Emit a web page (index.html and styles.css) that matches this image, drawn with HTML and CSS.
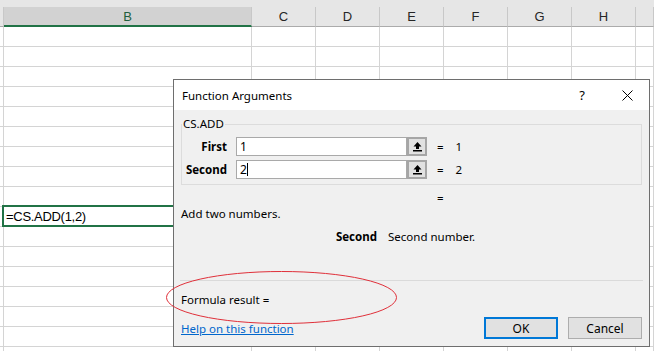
FILE: index.html
```html
<!DOCTYPE html>
<html lang="en">
<head>
  <meta charset="UTF-8" />
  <title>Function Arguments</title>
  <link rel="stylesheet" href="styles.css">
</head>
<body>
  <div class="sheet">
    <div class="colheads">
      <div class="ch"></div>
      <div class="ch sel">B</div>
      <div class="ch">C</div>
      <div class="ch">D</div>
      <div class="ch">E</div>
      <div class="ch">F</div>
      <div class="ch">G</div>
      <div class="ch">H</div>
      <div class="ch"></div>
    </div>
    <div class="grid" id="grid"></div>
  </div>

  <!-- Dialog -->
  <div class="dialog">
    <div class="titlebar">
      <span class="title">Function Arguments</span>
      <span class="help">?</span>
      <span class="close">
        <svg width="11" height="11" viewBox="0 0 11 11"><path d="M0.5 0.5 L10.5 10.5 M10.5 0.5 L0.5 10.5" stroke="#000" stroke-width="1" fill="none"/></svg>
      </span>
    </div>
    <div class="dlg-body">
      <fieldset class="group">
        <legend>CS.ADD</legend>
        <div class="arg">
          <span class="arg-name">First</span>
          <div class="field">1</div>
          <span class="pick">
            <svg width="9" height="10" viewBox="0 0 9 10"><path d="M4.5 0 L8.5 4.5 L6 4.5 L6 7 L3 7 L3 4.5 L0.5 4.5 Z" fill="#000"/><rect x="0" y="8" width="9" height="1.5" fill="#000"/></svg>
          </span>
          <span class="eq">=</span>
          <span class="val">1</span>
        </div>
        <div class="arg">
          <span class="arg-name">Second</span>
          <div class="field">2<span class="caret"></span></div>
          <span class="pick">
            <svg width="9" height="10" viewBox="0 0 9 10"><path d="M4.5 0 L8.5 4.5 L6 4.5 L6 7 L3 7 L3 4.5 L0.5 4.5 Z" fill="#000"/><rect x="0" y="8" width="9" height="1.5" fill="#000"/></svg>
          </span>
          <span class="eq">=</span>
          <span class="val">2</span>
        </div>
      </fieldset>
      <div class="total"><span class="eq">=</span></div>
      <p class="desc">Add two numbers.</p>
      <div class="arg-help">
        <span class="arg-title">Second</span>
        <span>Second number.</span>
      </div>
      <div class="sep"></div>
      <div class="result">Formula result =</div>
      <div class="footer">
        <a class="help-link" href="#">Help on this function</a>
        <button class="btn default">OK</button>
        <button class="btn">Cancel</button>
      </div>
    </div>
  </div>

  <svg class="mark" width="233" height="55" viewBox="0 0 233 55">
    <ellipse cx="116.5" cy="27.5" rx="115" ry="26" fill="none" stroke="#e0303a" stroke-width="1"/>
  </svg>

  <script>
    let grid = document.getElementById('grid');
    for (let r = 1; r <= 17; r++) {
      for (let c = 0; c < 9; c++) {
        let cell = document.createElement('div');
        cell.className = 'cell';
        if (r === 10 && c === 1) {
          cell.className = 'cell active';
          cell.textContent = '=CS.ADD(1,2)';
        }
        grid.appendChild(cell);
      }
    }
  </script>
</body>
</html>
```

FILE: styles.css
```css
* {
  box-sizing: border-box;
}
body {
  margin: 0;
  font-family: "Noto Sans", "Liberation Sans", sans-serif;
  background: #fff;
  overflow: hidden;
  width: 654px;
  height: 351px;
  position: relative;
}

/* spreadsheet */
.sheet {
  width: 654px;
}

.colheads {
  display: grid;
  grid-template-columns: 4px 248px repeat(6, 64px) 1fr;
  background: #e6e6e6;
  padding-top: 7px;
}

.ch {
  height: 20px;
  border-right: 1px solid #c8c8c8;
  border-bottom: 1px solid #ababab;
  font-family: "Liberation Sans", sans-serif;
  font-size: 13px;
  line-height: 19px;
  text-align: center;
  color: #262626;
}

.ch.sel {
  background: #d2d2d2;
  border-bottom: 2px solid #217346;
  color: #1f5f3d;
}

.grid {
  display: grid;
  grid-template-columns: 4px 248px repeat(6, 64px) 1fr;
  grid-auto-rows: 20px;
}

.cell {
  border-right: 1px solid #d4d4d4;
  border-bottom: 1px solid #d4d4d4;
  font-family: "Liberation Sans", sans-serif;
  font-size: 13px;
  letter-spacing: -0.3px;
  line-height: 19px;
  padding-left: 2px;
  color: #000;
  white-space: nowrap;
  position: relative;
}

.cell.active::after {
  content: "";
  position: absolute;
  top: -2px;
  left: -2px;
  right: -1px;
  bottom: -1px;
  border: 2px solid #217346;
}

/* dialog */
.dialog {
  position: absolute;
  left: 173px;
  top: 79px;
  width: 477px;
  height: 268px;
  border: 1px solid #6e6e6e;
  background: #f0f0f0;
  font-size: 11.5px;
  color: #000;
  display: flex;
  flex-direction: column;
}

.titlebar {
  height: 30px;
  background: #fff;
  display: flex;
  align-items: center;
  padding-left: 8px;
}

.title {
  flex: 1;
}

.help {
  width: 30px;
  text-align: center;
  margin-right: 8px;
  font-size: 13px;
}

.close {
  width: 44px;
  display: flex;
  justify-content: center;
}

.dlg-body {
  flex: 1;
  padding: 0 7px;
}

.group {
  margin: 6px 0 0;
  padding: 5px 0 5px;
  border: 1px solid #dcdcdc;
  min-width: 0;
}

.group legend {
  padding: 0 1px;
  line-height: 16px;
}

.arg {
  display: flex;
  align-items: center;
  height: 19px;
}

.arg + .arg {
  margin-top: 4px;
}

.arg-name {
  width: 45px;
  text-align: right;
  font-weight: bold;
  margin-right: 9px;
}

.field {
  width: 171px;
  height: 19px;
  background: #fff;
  border: 1px solid #a9a9a9;
  padding-left: 3px;
  line-height: 17px;
  font-size: 12px;
  display: flex;
  align-items: center;
}

.caret {
  display: inline-block;
  width: 1px;
  height: 13px;
  background: #000;
}

.pick {
  width: 20px;
  height: 19px;
  background: #e1e1e1;
  border: 2px solid #a6a6a6;
  display: flex;
  align-items: center;
  justify-content: center;
}

.eq {
  margin-left: 10px;
}

.val {
  margin-left: 12px;
}

.total {
  margin-top: 5px;
  padding-left: 256px;
  line-height: 16px;
  height: 16px;
}

.total .eq {
  margin-left: 0;
}

.desc {
  margin: 0;
  line-height: 16px;
}

.arg-help {
  margin-top: 7px;
  display: flex;
  line-height: 16px;
}

.arg-title {
  width: 196px;
  text-align: right;
  font-weight: bold;
  margin-right: 11px;
}

.sep {
  margin: 35px -1px 0;
  border-top: 1px solid #dadada;
}

.result {
  margin-top: 11px;
  line-height: 16px;
}

.footer {
  margin-top: 9px;
  display: flex;
  align-items: center;
  height: 22px;
}

.help-link {
  flex: 1;
  color: #0066cc;
  text-decoration: underline;
}

.btn {
  width: 74px;
  height: 22px;
  font-family: inherit;
  font-size: 12px;
  background: #e1e1e1;
  border: 1px solid #adadad;
  color: #000;
  padding: 0;
}

.btn + .btn {
  margin-left: 10px;
}

.btn.default {
  border: 2px solid #0078d7;
}

.mark {
  position: absolute;
  left: 165px;
  top: 270px;
}
```
